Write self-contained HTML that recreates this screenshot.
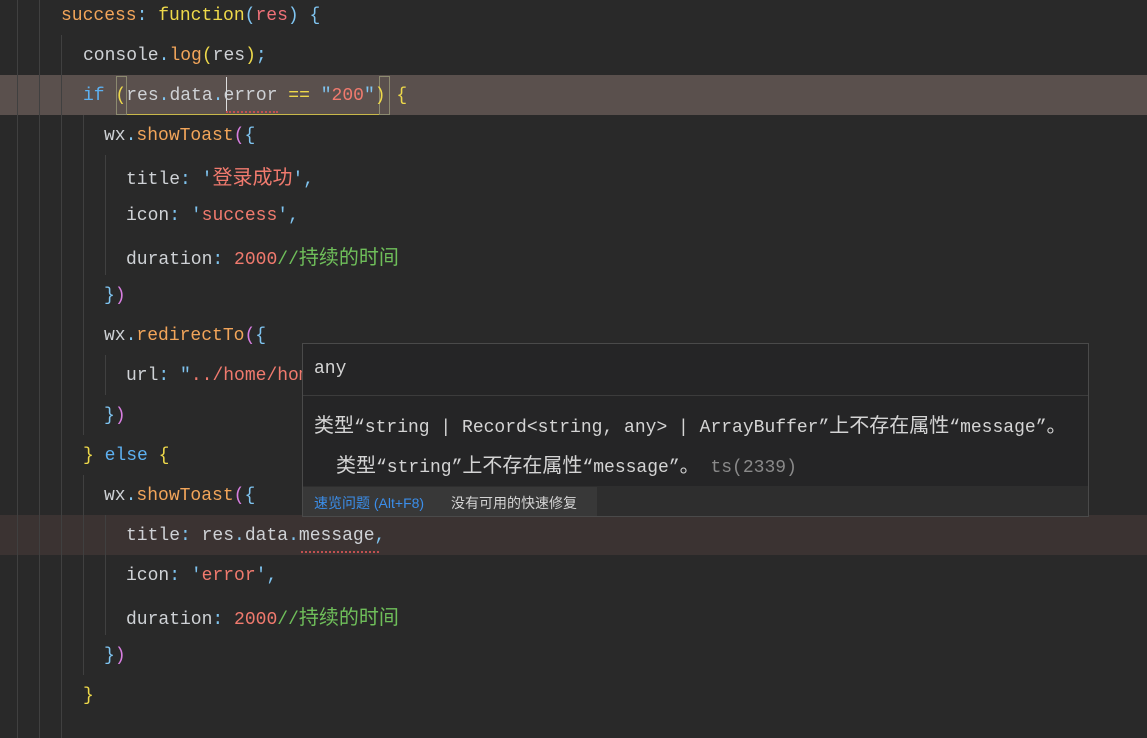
<!DOCTYPE html><html><head><meta charset="utf-8"><style>
body{margin:0;width:1147px;height:738px;background:#292929;overflow:hidden;position:relative;font-family:"Liberation Mono","Noto Sans CJK SC",monospace;font-size:18px;color:#cfd2d6}
.l{position:absolute;left:0;height:40px;line-height:40px;white-space:pre}
.g{position:absolute;width:1px;background:#404040}
.o{color:#f2a55a}.y{color:#eed94a}.r{color:#f07178}.b{color:#7fc4f0}.p{color:#d77ee0}.s{color:#f07a6e}.n{color:#f07a6e}.c{color:#6fbf5a}.k{color:#5db0f0}
.z{font-family:"Noto Sans CJK SC",sans-serif;font-size:20px}
.tip{position:absolute;left:302px;top:343px;width:785px;height:172px;background:#252526;border:1px solid #4a4a4a;font-family:"Liberation Sans","Noto Sans CJK SC",sans-serif}
.m{font-family:"Liberation Mono","Noto Sans CJK SC",monospace}
</style></head><body>
<div style="position:absolute;left:0;top:75px;width:1147px;height:40px;background:#5a504d"></div>
<div style="position:absolute;left:0;top:515px;width:1147px;height:40px;background:#3b3332"></div>
<div style="position:absolute;left:116px;top:75px;width:273px;height:39px;border-bottom:1px solid #c8b84a"></div>
<div style="position:absolute;left:116px;top:76px;width:9px;height:37px;border:1px solid #8c8a70"></div>
<div style="position:absolute;left:379px;top:76px;width:9px;height:37px;border:1px solid #8c8a70"></div>
<div style="position:absolute;left:226px;top:77px;width:1px;height:36px;background:#ddd"></div>
<div class="g" style="left:17px;top:0;height:738px"></div>
<div class="g" style="left:39px;top:0;height:738px"></div>
<div class="g" style="left:61px;top:35px;height:703px"></div>
<div class="g" style="left:83px;top:115px;height:320px"></div>
<div class="g" style="left:83px;top:475px;height:200px"></div>
<div class="g" style="left:105px;top:155px;height:120px"></div>
<div class="g" style="left:105px;top:355px;height:40px"></div>
<div class="g" style="left:105px;top:515px;height:120px"></div>
<div class="l" style="top:-4px;left:61px"><span class="o">success</span><span class="b">:</span> <span class="y">function</span><span class="b">(</span><span class="r">res</span><span class="b">) {</span></div>
<div class="l" style="top:36px;left:83px">console<span class="b">.</span><span class="o">log</span><span class="y">(</span>res<span class="y">)</span><span class="b">;</span></div>
<div class="l" style="top:76px;left:83px"><span class="k">if</span> <span class="y">(</span>res<span class="b">.</span>data<span class="b">.</span>error <span class="y">==</span> <span class="b">"</span><span class="s">200</span><span class="b">"</span><span class="y">) {</span></div>
<div class="l" style="top:116px;left:104px">wx<span class="b">.</span><span class="o">showToast</span><span class="p">(</span><span class="b">{</span></div>
<div class="l" style="top:156px;left:126px">title<span class="b">:</span> <span class="b">'</span><span class="s z">登录成功</span><span class="b">',</span></div>
<div class="l" style="top:196px;left:126px">icon<span class="b">:</span> <span class="b">'</span><span class="s">success</span><span class="b">',</span></div>
<div class="l" style="top:236px;left:126px">duration<span class="b">:</span> <span class="n">2000</span><span class="c">//<span class="z">持续的时间</span></span></div>
<div class="l" style="top:276px;left:104px"><span class="b">}</span><span class="p">)</span></div>
<div class="l" style="top:316px;left:104px">wx<span class="b">.</span><span class="o">redirectTo</span><span class="p">(</span><span class="b">{</span></div>
<div class="l" style="top:356px;left:126px">url<span class="b">:</span> <span class="b">"</span><span class="s">../home/home</span></div>
<div class="l" style="top:396px;left:104px"><span class="b">}</span><span class="p">)</span></div>
<div class="l" style="top:436px;left:83px"><span class="y">}</span> <span class="k">else</span> <span class="y">{</span></div>
<div class="l" style="top:476px;left:104px">wx<span class="b">.</span><span class="o">showToast</span><span class="p">(</span><span class="b">{</span></div>
<div class="l" style="top:516px;left:126px">title<span class="b">:</span> res<span class="b">.</span>data<span class="b">.</span>message<span class="b">,</span></div>
<div class="l" style="top:556px;left:126px">icon<span class="b">:</span> <span class="b">'</span><span class="s">error</span><span class="b">',</span></div>
<div class="l" style="top:596px;left:126px">duration<span class="b">:</span> <span class="n">2000</span><span class="c">//<span class="z">持续的时间</span></span></div>
<div class="l" style="top:636px;left:104px"><span class="b">}</span><span class="p">)</span></div>
<div class="l" style="top:676px;left:83px"><span class="y">}</span></div>
<div style="position:absolute;left:226px;top:111px;width:52px;border-top:2px dotted #c05050"></div>
<div style="position:absolute;left:301px;top:551px;width:78px;border-top:2px dotted #c05050"></div>
<div class="tip">
<div class="m" style="position:absolute;left:11px;top:15px;font-size:18px;color:#d4d4d4">any</div>
<div style="position:absolute;left:0;top:51px;width:785px;height:1px;background:#3c3c3c"></div>
<div class="m" style="position:absolute;left:11px;top:65px;font-size:18px;color:#d4d4d4;white-space:nowrap"><span class="z">类型</span>“string | Record&lt;string, any&gt; | ArrayBuffer”<span class="z">上不存在属性</span>“message”<span class="z">。</span></div>
<div class="m" style="position:absolute;left:33px;top:105px;font-size:18px;color:#d4d4d4;white-space:nowrap"><span class="z">类型</span>“string”<span class="z">上不存在属性</span>“message”<span class="z">。</span> <span style="color:#8a8a8a">ts(2339)</span></div>
<div style="position:absolute;left:0;top:142px;width:785px;height:30px;background:#2e2e2e"></div>
<div style="position:absolute;left:0;top:143px;width:294px;height:29px;background:#383838"></div>
<div style="position:absolute;left:11px;top:149px;font-size:14px;color:#3b8eea;white-space:nowrap">速览问题 (Alt+F8)</div>
<div style="position:absolute;left:148px;top:149px;font-size:14px;color:#d4d4d4;white-space:nowrap">没有可用的快速修复</div>
</div>
</body></html>
